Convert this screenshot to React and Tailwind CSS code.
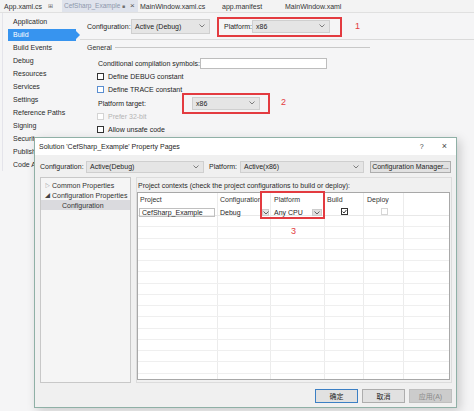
import React from "react";

const Chev = ({ c = "#707070" }) => (
  <svg width="6" height="4" viewBox="0 0 6 4" className="shrink-0">
    <polyline points="0.5,0.5 3,3 5.5,0.5" fill="none" stroke={c} strokeWidth="0.9" />
  </svg>
);

const Drop = ({ text, w, h = "h-[13px]", cls = "" }) => (
  <div className={`${w} ${h} ${cls} flex items-center justify-between bg-[#e5e5e5] border border-[#cfcfcf] pl-[3px] pr-[4px] text-[#1e1e1e]`}>
    <span>{text}</span>
    <Chev />
  </div>
);

const Box = ({ cls = "border-[#333]" }) => (
  <div className={`w-[7px] h-[7px] border ${cls} bg-white shrink-0`} />
);

const sideItems = [
  "Application",
  "Build",
  "Build Events",
  "Debug",
  "Resources",
  "Services",
  "Settings",
  "Reference Paths",
  "Signing",
  "Security",
  "Publish",
  "Code Analysis",
];
const clipped = ["Security", "Publish", "Code Analysis"];

export default function App() {
  const rows = Array.from({ length: 15 });
  return (
    <div
      className="w-[474px] h-[411px] relative overflow-hidden bg-[#f5f5f6] text-[7px] leading-none text-[#1e1e1e]"
      style={{ fontFamily: '"Liberation Sans", "Noto Sans CJK SC", sans-serif' }}
    >
      {/* tab bar */}
      <div className="h-[13px] flex items-center bg-[#f3f3f3] border-b border-[#e0e0e0] text-[#333]">
        <div className="w-[62px] pl-[4px] flex items-center gap-[6px]">
          <span>App.xaml.cs</span>
          <span className="text-[6px] text-[#666]">⊞</span>
        </div>
        <div className="w-[76px] h-full flex items-center pl-[2px] bg-[#dfe3ec] text-[#8c97ab]">
          <span className="w-[58px] text-[6.5px] whitespace-nowrap">CefSharp_Example</span>
          <span className="w-[8px] text-[5px] text-[#707070]">■</span>
          <span className="text-[#505050] text-[8px]">×</span>
        </div>
        <div className="w-[84px] pl-[2px]">MainWindow.xaml.cs</div>
        <div className="w-[63px]">app.manifest</div>
        <div>MainWindow.xaml</div>
      </div>

      <div className="flex">
        {/* sidebar */}
        <div className="w-[78px] pt-[2px] border-l border-[#e4e4ea] ml-[2px]">
          {sideItems.map((s) =>
            s === "Build" ? (
              <div key={s} className="relative h-[13px] flex items-center">
                <div className="ml-[5px] w-[69px] h-[12px] bg-[#3794ef] text-white flex items-center pl-[5px]">
                  {s}
                </div>
                <div className="w-0 h-0 border-y-[4px] border-y-transparent border-l-[4px] border-l-[#3794ef]" />
              </div>
            ) : (
              <div key={s} className="h-[13px] flex items-center pl-[10px] text-[#2a2a2a]">
                <span className={clipped.includes(s) ? "w-[22px] overflow-hidden whitespace-nowrap" : ""}>{s}</span>
              </div>
            )
          )}
        </div>

        {/* main */}
        <div className="flex-1">
          <div className="h-[27px] flex items-center border-b border-[#dadada] pl-[7px]">
            <span className="w-[44px]">Configuration:</span>
            <Drop text="Active (Debug)" w="w-[79px]" h="h-[15px]" />
            <span className="ml-[14px] w-[28px]">Platform:</span>
            <Drop text="x86" w="w-[78px]" />
          </div>
          <div className="h-[13px] flex items-center pl-[7px] mt-[1px]">
            <span className="w-[28px] text-[#333]">General</span>
            <div className="w-[255px] h-px bg-[#c8c8c8]" />
          </div>
          <div className="h-[14px] flex items-center pl-[18px] mt-[2px]">
            <span className="w-[102px]">Conditional compilation symbols:</span>
            <div className="w-[127px] h-[11px] bg-white border border-[#bdbdbd]" />
          </div>
          <div className="h-[13px] flex items-center pl-[17px] gap-[4px]">
            <Box />
            <span>Define DEBUG constant</span>
          </div>
          <div className="h-[13px] flex items-center pl-[17px] gap-[4px]">
            <Box cls="border-[#5a8ed0]" />
            <span>Define TRACE constant</span>
          </div>
          <div className="h-[14px] flex items-center pl-[18px]">
            <span className="w-[94px]">Platform target:</span>
            <Drop text="x86" w="w-[68px]" />
          </div>
          <div className="h-[13px] flex items-center pl-[17px] gap-[4px] text-[#b4b4b4]">
            <Box cls="border-[#d4d4d4]" />
            <span>Prefer 32-bit</span>
          </div>
          <div className="h-[13px] flex items-center pl-[17px] gap-[4px]">
            <Box />
            <span>Allow unsafe code</span>
          </div>
        </div>
      </div>

      {/* annotations */}
      <div className="absolute left-[217px] top-[17px] w-[125px] h-[20px] border-2 border-[#e33b40]" />
      <div className="absolute left-[355px] top-[22px] text-[9px] text-[#e33b40]">1</div>
      <div className="absolute left-[182px] top-[93px] w-[88px] h-[21px] border-2 border-[#e33b40]" />
      <div className="absolute left-[281px] top-[98px] text-[9px] text-[#e33b40]">2</div>

      {/* dialog */}
      <div className="absolute left-[34px] top-[137px] w-[423px] h-[271px] border border-[#8fb0a6] bg-[#f0f0f0] shadow-[3px_3px_10px_rgba(0,0,0,0.18)] flex flex-col">
        <div className="h-[17px] bg-white flex items-center pl-[4px] pr-[9px]">
          <span className="flex-1">Solution 'CefSharp_Example' Property Pages</span>
          <span className="w-[22px] text-[#444]">?</span>
          <span className="text-[9px] text-[#444]">×</span>
        </div>
        <div className="h-[19px] flex items-center pl-[5px] mt-[2px]">
          <span className="w-[46px]">Configuration:</span>
          <Drop text="Active(Debug)" w="w-[118px]" h="h-[12px]" />
          <span className="ml-[5px] w-[31px]">Platform:</span>
          <Drop text="Active(x86)" w="w-[124px]" h="h-[12px]" />
          <div className="ml-[6px] w-[81px] h-[12px] flex items-center justify-center bg-[#e1e1e1] border border-[#adadad]">
            Configuration Manager...
          </div>
        </div>
        <div className="flex pl-[5px] pr-[4px] mt-[1px] gap-[5px]">
          <div className="w-[91px] h-[206px] bg-[#f5f5f5] border border-[#c8c8c8] pt-[2px] text-[#333]">
            <div className="h-[10px] flex items-center pl-[4px]">
              <span className="w-[7px] text-[5px] text-[#666]">▷</span>
              <span>Common Properties</span>
            </div>
            <div className="h-[10px] flex items-center pl-[4px]">
              <span className="w-[7px] text-[5px] text-[#444]">◢</span>
              <span>Configuration Properties</span>
            </div>
            <div className="h-[10px] flex items-center pl-[21px] bg-[#dadade]">Configuration</div>
          </div>
          <div className="w-[316px] h-[206px] border border-[#dcdcdc] relative">
            <div className="h-[14px] flex items-center pl-[1px] text-[#2a2a2a]">
              Project contexts (check the project configurations to build or deploy):
            </div>
            <div className="w-[313px] h-[188px] bg-white border border-[#a8a8a8] overflow-hidden">
              <div className="flex h-[23px] border-b border-[#e8e8e8]">
                <div className="w-[80px] border-r border-[#ececec] pl-[2px] pt-[3px] flex flex-col gap-[5px]">
                  <span className="text-[#333]">Project</span>
                  <div className="w-[76px] h-[10px] border border-[#c0c0c0] flex items-center pl-[2px] -ml-[1px]">
                    CefSharp_Example
                  </div>
                </div>
                <div className="w-[53px] border-r border-[#ececec] pl-[2px] pt-[3px] flex flex-col gap-[6px]">
                  <span className="text-[#333]">Configuration</span>
                  <div className="flex items-center justify-between pr-[1px]">
                    <span>Debug</span>
                    <div className="w-[7px] h-[7px] bg-[#e5e5e5] border border-[#cdcdcd] flex items-center justify-center">
                      <Chev c="#555" />
                    </div>
                  </div>
                </div>
                <div className="w-[54px] border-r border-[#ececec] pl-[3px] pt-[3px] flex flex-col gap-[6px]">
                  <span className="text-[#333]">Platform</span>
                  <div className="flex items-center justify-between pr-[2px]">
                    <span>Any CPU</span>
                    <div className="w-[10px] h-[7px] bg-[#e0e0e0] border border-[#cdcdcd] flex items-center justify-center">
                      <Chev c="#555" />
                    </div>
                  </div>
                </div>
                <div className="w-[39px] border-r border-[#ececec] pl-[2px] pt-[3px] flex flex-col gap-[5px]">
                  <span className="text-[#333]">Build</span>
                  <div className="ml-[14px] w-[7px] h-[7px] border border-[#333] flex items-center justify-center">
                    <svg width="5" height="5" viewBox="0 0 5 5">
                      <polyline points="0.6,2.6 2,4 4.4,1" fill="none" stroke="#222" strokeWidth="0.9" />
                    </svg>
                  </div>
                </div>
                <div className="w-[40px] border-r border-[#ececec] pl-[3px] pt-[3px] flex flex-col gap-[5px]">
                  <span className="text-[#333]">Deploy</span>
                  <div className="ml-[14px] w-[7px] h-[7px] border border-[#d6d6d6]" />
                </div>
                <div className="flex-1" />
              </div>
              {rows.map((_, i) => (
                <div key={i} className="flex h-[11.25px] border-b border-[#efefef]">
                  <div className="w-[80px] border-r border-[#ececec]" />
                  <div className="w-[53px] border-r border-[#ececec]" />
                  <div className="w-[54px] border-r border-[#ececec]" />
                  <div className="w-[39px] border-r border-[#ececec]" />
                  <div className="w-[40px] border-r border-[#ececec]" />
                  <div className="flex-1" />
                </div>
              ))}
            </div>
          </div>
        </div>
        <div className="flex justify-end gap-[4px] pr-[4px] mt-[6px]">
          <div className="w-[43px] h-[14px] flex items-center justify-center bg-[#e1e1e1] border border-[#3b7fc4]">确定</div>
          <div className="w-[43px] h-[14px] flex items-center justify-center bg-[#e1e1e1] border border-[#adadad]">取消</div>
          <div className="w-[43px] h-[14px] flex items-center justify-center bg-[#cccccc] border border-[#bfbfbf] text-[#8a8a8a]">应用(A)</div>
        </div>
      </div>

      <div className="absolute left-[260px] top-[191px] w-[65px] h-[28px] border-2 border-[#e33b40]" />
      <div className="absolute left-[291px] top-[227px] text-[9px] text-[#e33b40]">3</div>
    </div>
  );
}
